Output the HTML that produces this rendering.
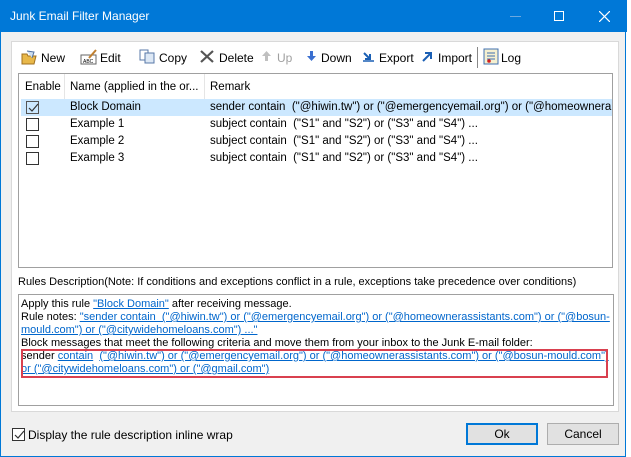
<!DOCTYPE html>
<html><head><meta charset="utf-8"><style>
*{box-sizing:border-box;margin:0;padding:0}
body{width:631px;height:457px;background:#fff;font-family:"Liberation Sans",sans-serif;font-size:11px;color:#000;position:relative;overflow:hidden}
#win{position:absolute;left:0;top:0;width:626px;height:457px;background:#f0f0f0;border:1px solid #0078d7;border-top:none}
#title{position:absolute;left:0;top:0;width:626px;height:32px;background:#0078d7;color:#fff;font-size:12px}
.a{position:absolute;white-space:nowrap}
#panel{position:absolute;left:10px;top:41px;width:608px;height:371px;background:#fff;border:1px solid #d9d9d9}
#list{position:absolute;left:17px;top:73px;width:595px;height:195px;border:1px solid #a0a0a0;background:#fff;overflow:hidden;font-size:11.5px}
.cb{position:absolute;width:13px;height:13px;border:1px solid #333;background:#fff}
#desc{position:absolute;left:17px;top:294px;width:596px;height:112px;border:1px solid #a0a0a0;background:#fff;overflow:hidden}
.l{color:#0066cc;text-decoration:underline}
.btn{position:absolute;height:22px;border:1px solid #adadad;background:#e1e1e1;text-align:center;line-height:20px;font-size:12px}
.t{font-size:12px}
</style></head><body>
<div id="win">
<div id="title">
 <div class="a" style="left:9px;top:9px">Junk Email Filter Manager</div>
 <div class="a" style="left:509px;top:16px;width:11px;height:1px;background:#6aa8e0"></div>
 <div class="a" style="left:553px;top:11px;width:10px;height:10px;border:1px solid #fff"></div>
 <svg class="a" style="left:598px;top:11px" width="11" height="11"><path d="M0 0L11 11M11 0L0 11" stroke="#fff" stroke-width="1.2"/></svg>
</div>
<div id="panel"></div>
<svg class="a" style="left:20px;top:49px" width="17" height="16"><path d="M1 5h5l1 2h8l-2 8H1z" fill="#e8b84a" stroke="#a07020"/><path d="M6 2l7 1-2 6" fill="#cfe0f0" stroke="#5070a0"/></svg>
<div class="a t" style="left:40px;top:51px">New</div>
<svg class="a" style="left:79px;top:48px" width="18" height="18"><rect x="1" y="7" width="15" height="9" fill="#fff" stroke="#666"/><text x="3" y="15" font-size="5" font-family="Liberation Sans">ABC</text><path d="M9 10L16 2" stroke="#c08030" stroke-width="2"/></svg>
<div class="a t" style="left:99px;top:51px">Edit</div>
<svg class="a" style="left:138px;top:49px" width="16" height="15"><rect x="1" y="1" width="8" height="10" fill="#fff" stroke="#5878a8"/><rect x="6" y="4" width="9" height="10" fill="#dde8f5" stroke="#5878a8"/></svg>
<div class="a t" style="left:158px;top:51px">Copy</div>
<svg class="a" style="left:199px;top:50px" width="14" height="13"><path d="M1 1L13 12M13 1L1 12" stroke="#555" stroke-width="2.2"/></svg>
<div class="a t" style="left:218px;top:51px">Delete</div>
<svg class="a" style="left:260px;top:50px" width="11" height="12"><path d="M5.5 1L10 6H7v5H4V6H1z" fill="#c0c0c0"/></svg>
<div class="a t" style="left:276px;top:51px;color:#a0a0a0">Up</div>
<svg class="a" style="left:305px;top:50px" width="11" height="12"><path d="M5.5 11L10 6H7V1H4v5H1z" fill="#3a6fd0"/></svg>
<div class="a t" style="left:320px;top:51px">Down</div>
<svg class="a" style="left:361px;top:50px" width="13" height="12"><path d="M2 3l6 6M8 4v5H3" stroke="#1a5fb4" stroke-width="2" fill="none"/><path d="M1 11h11" stroke="#1a5fb4" stroke-width="1.5"/></svg>
<div class="a t" style="left:378px;top:51px">Export</div>
<svg class="a" style="left:420px;top:50px" width="12" height="12"><path d="M2 11l8-8M4 3h6v6" stroke="#1a5fb4" stroke-width="2" fill="none"/></svg>
<div class="a t" style="left:437px;top:51px">Import</div>
<div class="a" style="left:476px;top:47px;width:1px;height:21px;background:#888"></div>
<svg class="a" style="left:482px;top:48px" width="16" height="17"><rect x="1" y="1" width="14" height="15" fill="#f5f0d0" stroke="#4070b0"/><path d="M4 5h8M4 8h8M4 11h8" stroke="#4070b0"/><circle cx="6" cy="13" r="1.8" fill="#d02020"/></svg>
<div class="a t" style="left:500px;top:51px">Log</div>
<div id="list">
 <div class="a" style="left:45px;top:0;width:1px;height:25px;background:#e5e5e5"></div>
 <div class="a" style="left:185px;top:0;width:1px;height:25px;background:#e5e5e5"></div>
 <div class="a" style="left:6px;top:7px">Enable</div>
 <div class="a" style="left:51px;top:7px">Name (applied in the or...</div>
 <div class="a" style="left:191px;top:7px">Remark</div>
 <div class="a" style="left:2px;top:25px;width:591px;height:17px;background:#cce8ff"></div>
 <div class="cb" style="left:7px;top:27px;border-color:#555;background:transparent"></div>
 <svg class="a" style="left:8px;top:28px" width="12" height="12"><path d="M2 6l3 3 6-7" stroke="#333" stroke-width="1.2" fill="none"/></svg>
 <div class="a" style="left:51px;top:27px">Block Domain</div>
 <div class="a" style="left:191px;top:27px">sender contain&nbsp; ("@hiwin.tw") or ("@emergencyemail.org") or ("@homeownera...</div>
 <div class="cb" style="left:7px;top:44px"></div>
 <div class="a" style="left:51px;top:44px">Example 1</div>
 <div class="a" style="left:191px;top:44px">subject contain&nbsp; ("S1" and "S2") or ("S3" and "S4") ...</div>
 <div class="cb" style="left:7px;top:61px"></div>
 <div class="a" style="left:51px;top:61px">Example 2</div>
 <div class="a" style="left:191px;top:61px">subject contain&nbsp; ("S1" and "S2") or ("S3" and "S4") ...</div>
 <div class="cb" style="left:7px;top:78px"></div>
 <div class="a" style="left:51px;top:78px">Example 3</div>
 <div class="a" style="left:191px;top:78px">subject contain&nbsp; ("S1" and "S2") or ("S3" and "S4") ...</div>
</div>
<div class="a" style="left:17px;top:276px">Rules Description(Note: If conditions and exceptions conflict in a rule, exceptions take precedence over conditions)</div>
<div id="desc">
 <div class="a" style="left:2px;top:3px">Apply this rule <span class="l">"Block Domain"</span> after receiving message.</div>
 <div class="a" style="left:2px;top:16px">Rule notes: <span class="l">"sender contain&nbsp; ("@hiwin.tw") or ("@emergencyemail.org") or ("@homeownerassistants.com") or ("@bosun-</span></div>
 <div class="a" style="left:2px;top:29px"><span class="l">mould.com") or ("@citywidehomeloans.com") ..."</span></div>
 <div class="a" style="left:2px;top:42px">Block messages that meet the following criteria and move them from your inbox to the Junk E-mail folder:</div>
 <div class="a" style="left:2px;top:55px">sender <span class="l">contain</span>&nbsp; <span class="l">("@hiwin.tw") or ("@emergencyemail.org") or ("@homeownerassistants.com") or ("@bosun-mould.com")</span></div>
 <div class="a" style="left:2px;top:68px"><span class="l">or ("@citywidehomeloans.com") or ("@gmail.com")</span></div>
 <div class="a" style="left:2px;top:54px;width:587px;height:29px;border:2px solid #d9404f"></div>
</div>
<div class="cb" style="left:11px;top:428px"></div>
<svg class="a" style="left:12px;top:429px" width="12" height="12"><path d="M2 6l3 3 6-7" stroke="#333" stroke-width="1.2" fill="none"/></svg>
<div class="a t" style="left:27px;top:428px">Display the rule description inline wrap</div>
<div class="btn" style="left:465px;top:423px;width:72px;border:2px solid #0078d7;line-height:18px">Ok</div>
<div class="btn" style="left:546px;top:423px;width:72px">Cancel</div>
</div>
</body></html>
